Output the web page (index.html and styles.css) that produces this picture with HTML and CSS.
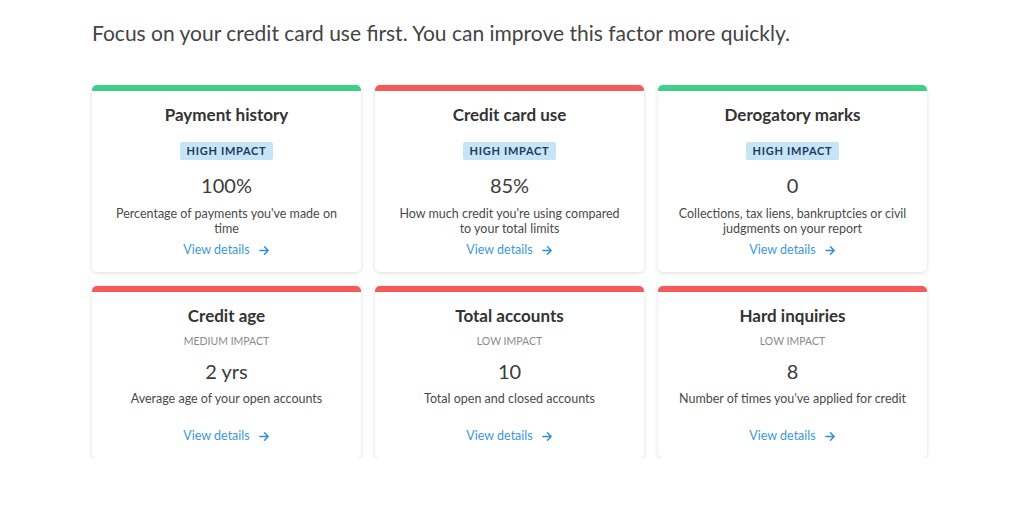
FILE: index.html
```html
<!DOCTYPE html>
<html lang="en">
<head>
<meta charset="utf-8">
<title>Credit factors</title>
<link rel="stylesheet" href="styles.css">
</head>
<body>
<main class="page">
  <p class="lead">Focus on your credit card use first. You can improve this factor more quickly.</p>
  <section class="grid">
    <article class="card good">
      <h2 class="title">Payment history</h2>
      <span class="badge">HIGH IMPACT</span>
      <div class="value">100%</div>
      <p class="desc">Percentage of payments you've made on time</p>
      <a class="link" href="#">View details <svg class="arrow" viewBox="0 0 12 12" width="11" height="11"><path d="M1 6h9M6 2l4 4-4 4" fill="none" stroke="currentColor" stroke-width="1.6" stroke-linecap="round" stroke-linejoin="round"/></svg></a>
    </article>
    <article class="card bad">
      <h2 class="title">Credit card use</h2>
      <span class="badge">HIGH IMPACT</span>
      <div class="value">85%</div>
      <p class="desc">How much credit you're using compared to your total limits</p>
      <a class="link" href="#">View details <svg class="arrow" viewBox="0 0 12 12" width="11" height="11"><path d="M1 6h9M6 2l4 4-4 4" fill="none" stroke="currentColor" stroke-width="1.6" stroke-linecap="round" stroke-linejoin="round"/></svg></a>
    </article>
    <article class="card good">
      <h2 class="title">Derogatory marks</h2>
      <span class="badge">HIGH IMPACT</span>
      <div class="value">0</div>
      <p class="desc">Collections, tax liens, bankruptcies or civil judgments on your report</p>
      <a class="link" href="#">View details <svg class="arrow" viewBox="0 0 12 12" width="11" height="11"><path d="M1 6h9M6 2l4 4-4 4" fill="none" stroke="currentColor" stroke-width="1.6" stroke-linecap="round" stroke-linejoin="round"/></svg></a>
    </article>
    <article class="card bad">
      <h2 class="title">Credit age</h2>
      <span class="label">MEDIUM IMPACT</span>
      <div class="value">2 yrs</div>
      <p class="desc">Average age of your open accounts</p>
      <a class="link" href="#">View details <svg class="arrow" viewBox="0 0 12 12" width="11" height="11"><path d="M1 6h9M6 2l4 4-4 4" fill="none" stroke="currentColor" stroke-width="1.6" stroke-linecap="round" stroke-linejoin="round"/></svg></a>
    </article>
    <article class="card bad">
      <h2 class="title">Total accounts</h2>
      <span class="label">LOW IMPACT</span>
      <div class="value">10</div>
      <p class="desc">Total open and closed accounts</p>
      <a class="link" href="#">View details <svg class="arrow" viewBox="0 0 12 12" width="11" height="11"><path d="M1 6h9M6 2l4 4-4 4" fill="none" stroke="currentColor" stroke-width="1.6" stroke-linecap="round" stroke-linejoin="round"/></svg></a>
    </article>
    <article class="card bad">
      <h2 class="title">Hard inquiries</h2>
      <span class="label">LOW IMPACT</span>
      <div class="value">8</div>
      <p class="desc">Number of times you've applied for credit</p>
      <a class="link" href="#">View details <svg class="arrow" viewBox="0 0 12 12" width="11" height="11"><path d="M1 6h9M6 2l4 4-4 4" fill="none" stroke="currentColor" stroke-width="1.6" stroke-linecap="round" stroke-linejoin="round"/></svg></a>
    </article>
  </section>
</main>
</body>
</html>
```
FILE: styles.css
```css
* { box-sizing: border-box; }
html, body { margin: 0; background: #fff; }
body { font-family: Lato, "Noto Sans", Arial, sans-serif; color: #3c3c3c; }
.page { padding: 20px 0 0 92px; width: 928px; box-sizing: content-box; }
.lead { margin: 0 0 39px; font-size: 21px; line-height: 26px; color: #444; font-weight: 400; }
.grid { display: grid; grid-template-columns: repeat(3, 269px); column-gap: 14px; row-gap: 14px; }
.card {
  background: #fff;
  border-radius: 5px;
  border-top: 6px solid #3ed08a;
  box-shadow: 0 1px 4px rgba(0,0,0,0.14);
  display: flex; flex-direction: column; align-items: center;
  padding: 13px 18px 14px;
  text-align: center;
}
.card.bad { border-top-color: #f45a5a; }
.title { margin: 0; font-size: 17px; line-height: 22px; font-weight: 700; color: #333; }
.badge {
  margin-top: 16px;
  background: #c6e4f8;
  color: #1d3b57;
  font-size: 11px; font-weight: 700; letter-spacing: 0.7px;
  line-height: 18px; padding: 0 7px; border-radius: 2px;
}
.label { margin-top: 7px; font-size: 10.5px; line-height: 14px; color: #8a8a8a; font-weight: 400; }
.value { margin-top: 12px; font-size: 20px; line-height: 26px; color: #3c3c3c; }
.label + .value { margin-top: 10px; }
.desc { margin: 8px 0 0; font-size: 12.5px; line-height: 15px; min-height: 30px; color: #4a4a4a; }
.label ~ .desc { margin-top: 7px; }
.link { margin-top: 6px; font-size: 12.5px; line-height: 16px; color: #3b99d9; text-decoration: none; display: inline-flex; align-items: center; gap: 9px; }
.label ~ .link { margin-top: 7px; }
.arrow { color: #2e8fd8; }
```
